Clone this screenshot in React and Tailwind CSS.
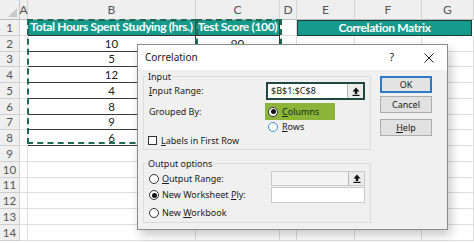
import React from "react";

const COLS = [
  { key: "A", w: "w-[8px]" },
  { key: "B", w: "w-[168px]" },
  { key: "C", w: "w-[84px]" },
  { key: "D", w: "w-[17px]" },
  { key: "E", w: "w-[58px]" },
  { key: "F", w: "w-[67px]" },
  { key: "G", w: "w-[52px]" },
];

const hours = ["10", "5", "12", "4", "8", "9", "6"];

function U({ children }) {
  return <span className="underline underline-offset-[1px]">{children}</span>;
}

function Radio({ checked, hover }) {
  return (
    <span
      className={
        "inline-flex shrink-0 items-center justify-center w-[10px] h-[10px] rounded-full bg-white border " +
        (hover ? "border-[#3f8fd8]" : "border-[#333]")
      }
    >
      {checked && <span className="w-[5px] h-[5px] rounded-full bg-[#111]" />}
    </span>
  );
}

function PickButton() {
  return (
    <span className="flex items-center justify-center w-[16px] h-full bg-[#ececec] border-l border-[#b8b8b8]">
      <svg width="8" height="9" viewBox="0 0 8 9">
        <path d="M4 0.5 L7.5 4.5 H5.2 V7 H2.8 V4.5 H0.5 Z" fill="#111" />
        <rect x="0.5" y="7.8" width="7" height="1.2" fill="#111" />
      </svg>
    </span>
  );
}

const head = "bg-[#159a8c] text-white font-bold text-[12px] tracking-[-0.35px] whitespace-nowrap flex items-center justify-center";

function Sheet() {
  return (
    <div className="flex flex-col w-[474px] h-[243px] bg-white font-['Lato',sans-serif] text-[11.5px] text-[#222]">
      <div className="flex h-[20px] bg-[#efefef] border-b border-[#bcbcbc]">
        <div className="w-[20px] border-r border-[#c8c8c8] flex items-end justify-end p-[2px]">
          <span className="w-0 h-0 border-l-[9px] border-l-transparent border-b-[9px] border-b-[#c9c9c9]" />
        </div>
        {COLS.map((c) => (
          <div
            key={c.key}
            className={c.w + " border-r border-[#d4d4d4] flex items-center justify-center text-[#555] text-[12px]"}
          >
            {c.key}
          </div>
        ))}
      </div>
      {Array.from({ length: 14 }, (_, i) => i + 1).map((r) => (
        <div key={r} className="flex h-[15.75px]">
          <div className="w-[20px] bg-[#efefef] border-r border-b border-[#cfcfcf] flex items-center justify-center text-[#555] text-[11.5px]">
            {r}
          </div>
          <div className="w-[8px] border-r border-b border-[#dedede]" />
          {r === 1 ? (
            <>
              <div className={"w-[168px] border-r border-b border-[#333] " + head}>
                Total Hours Spent Studying (hrs.)
              </div>
              <div className={"w-[84px] border-r border-b border-[#333] " + head}>Test Score (100)</div>
              <div className="w-[17px] border-r border-b border-[#dedede]" />
              <div className={"w-[175px] border border-[#1d3d39] " + head}>Correlation Matrix</div>
            </>
          ) : (
            <>
              <div
                className={
                  "w-[168px] flex items-center justify-center border-r " +
                  (r <= 8 ? "border-b border-[#3a3a3a]" : "border-b border-[#dedede]")
                }
              >
                {r <= 8 ? hours[r - 2] : ""}
              </div>
              <div
                className={
                  "w-[84px] flex items-center justify-center border-r " +
                  (r <= 8 ? "border-b border-[#3a3a3a]" : "border-b border-[#dedede]")
                }
              >
                {r === 2 ? "90" : ""}
              </div>
              <div className="w-[17px] border-r border-b border-[#dedede]" />
              <div className="w-[58px] border-r border-b border-[#dedede]" />
              <div className="w-[67px] border-r border-b border-[#dedede]" />
              <div className="w-[52px] border-r border-b border-[#dedede]" />
            </>
          )}
        </div>
      ))}
    </div>
  );
}

function Dialog() {
  return (
    <div className="absolute left-[137px] top-[44px] w-[311px] h-[186px] bg-[#f0f0f0] border border-[#8a8a8a] shadow-[3px_5px_10px_rgba(0,0,0,0.22)] flex flex-col font-['Noto_Sans',sans-serif] text-[9px] text-[#1a1a1a]">
      <div className="h-[25px] bg-white flex items-center pl-[7px] pr-[13px] text-[10px]">
        <span className="flex-1">Correlation</span>
        <span className="mr-[30px] text-[10.5px]">?</span>
        <svg width="10" height="10" viewBox="0 0 10 10">
          <path d="M0.5 0.5 L9.5 9.5 M9.5 0.5 L0.5 9.5" stroke="#222" strokeWidth="1" />
        </svg>
      </div>
      <div className="flex pl-[5px] gap-[10px]">
        <div className="w-[227px] flex flex-col gap-[7px]">
          <fieldset className="border border-[#dcdcdc] h-[80px] px-[5px] pb-[4px]">
            <legend className="px-[1px] -ml-[2px] leading-[13px]">Input</legend>
            <div className="flex items-center h-[18px] mt-[-1px]">
              <span className="w-[117px]">
                <U>I</U>nput Range:
              </span>
              <div className="flex w-[99px] h-[18px] bg-white border-2 border-[#1f4843]">
                <span className="flex-1 pl-[3px] flex items-center text-[9px]">$B$1:$C$8</span>
                <PickButton />
              </div>
            </div>
            <div className="flex items-center h-[17px] mt-[3px]">
              <span className="w-[116px]">Grouped By:</span>
              <div className="flex items-center gap-[4px] w-[70px] h-[17px] bg-[#8cb33a] pl-[3px] text-[#15300f]">
                <Radio checked />
                <span>
                  <U>C</U>olumns
                </span>
              </div>
            </div>
            <div className="flex items-center h-[13px]">
              <span className="w-[119px]" />
              <Radio hover />
              <span className="ml-[4px]">
                <U>R</U>ows
              </span>
            </div>
            <div className="flex items-center h-[13px] mt-[1px] -ml-[1px] gap-[4px]">
              <span className="w-[9px] h-[9px] bg-white border border-[#333]" />
              <span>
                <U>L</U>abels in First Row
              </span>
            </div>
          </fieldset>
          <fieldset className="border border-[#dcdcdc] h-[66px] px-[5px]">
            <legend className="px-[1px] -ml-[2px] leading-[13px]">Output options</legend>
            <div className="flex items-center h-[15px] mt-[1px]">
              <Radio />
              <span className="ml-[3px] w-[109px]">
                <U>O</U>utput Range:
              </span>
              <div className="flex w-[94px] h-[15px] bg-[#f4f4f4] border border-[#c9c9c9]">
                <span className="flex-1" />
                <PickButton />
              </div>
            </div>
            <div className="flex items-center h-[16px] mt-[1px]">
              <Radio checked />
              <span className="ml-[3px] w-[109px]">
                New Worksheet <U>P</U>ly:
              </span>
              <div className="w-[94px] h-[16px] bg-white border border-[#c9c9c9]" />
            </div>
            <div className="flex items-center h-[16px] mt-[2px]">
              <Radio />
              <span className="ml-[3px]">
                New <U>W</U>orkbook
              </span>
            </div>
          </fieldset>
        </div>
        <div className="w-[52px] flex flex-col gap-[3px] pt-[6px]">
          <div className="h-[17px] bg-[#e3e3e3] border-2 border-[#2c7ac6] flex items-center justify-center">OK</div>
          <div className="h-[17px] bg-[#e1e1e1] border border-[#adadad] flex items-center justify-center">Cancel</div>
          <div className="h-[17px] mt-[3px] bg-[#e1e1e1] border border-[#adadad] flex items-center justify-center">
            <span>
              <U>H</U>elp
            </span>
          </div>
        </div>
      </div>
    </div>
  );
}

export default function App() {
  return (
    <div className="relative w-[474px] h-[243px] overflow-hidden bg-white">
      <Sheet />
      <div className="absolute left-[27px] top-[19px] w-[170px] h-[125px] border-2 border-dashed border-[#1f6a55]" />
      <div className="absolute left-[196px] top-[19px] w-[86px] h-[125px] border-2 border-dashed border-[#1f6a55]" />
      <Dialog />
    </div>
  );
}
